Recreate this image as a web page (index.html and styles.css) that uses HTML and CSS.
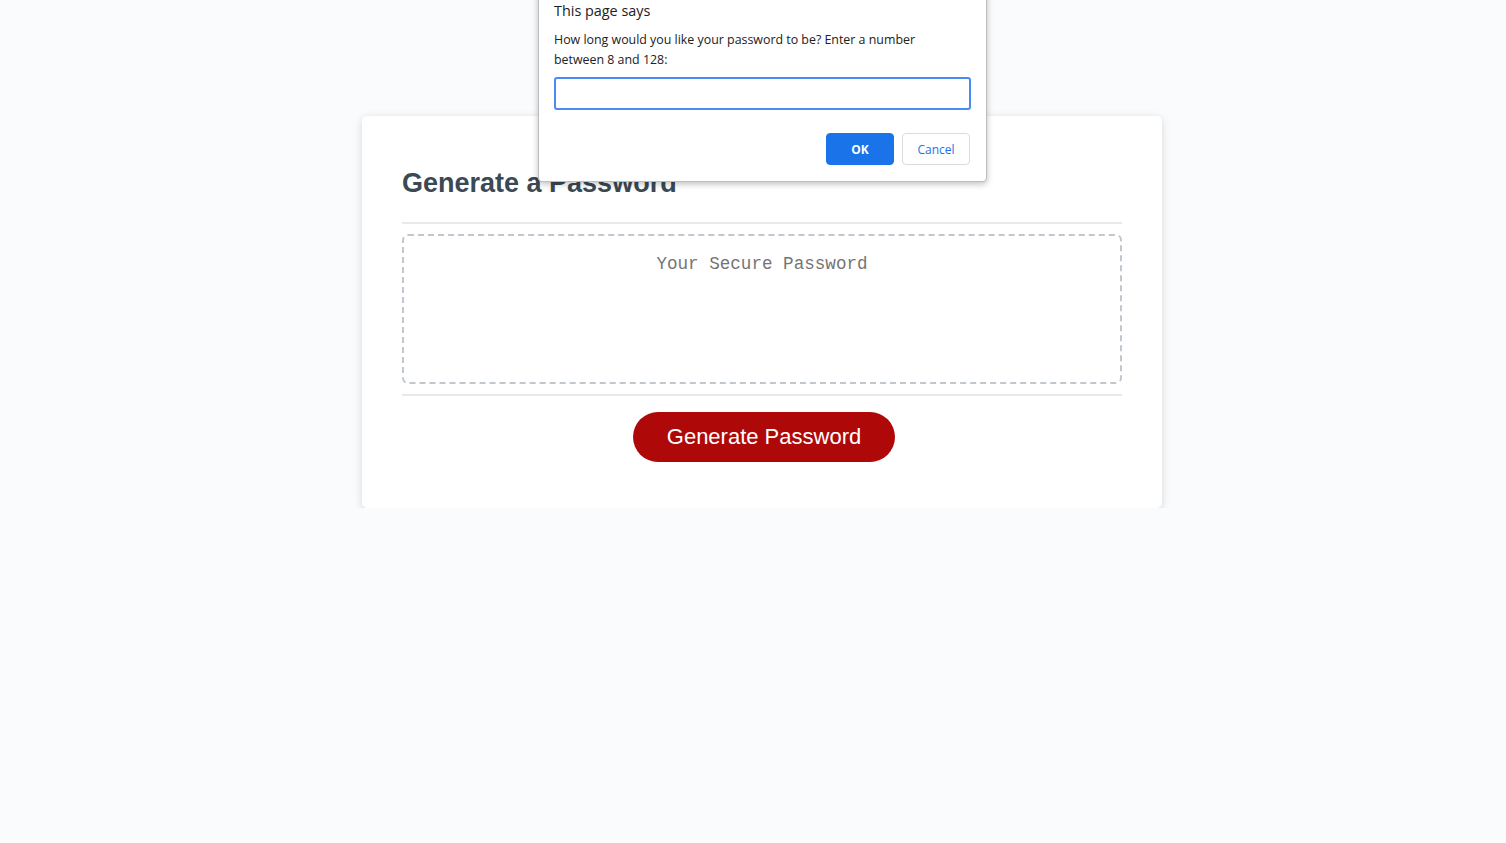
FILE: index.html
```html
<!DOCTYPE html>
<html lang="en">
<head>
<meta charset="utf-8">
<title>Password Generator</title>
<link rel="stylesheet" href="styles.css">
</head>
<body>
<div class="wrapper">
  <div class="card">
    <div class="card-header">
      <h2 class="card-title">Generate a Password</h2>
    </div>
    <div class="card-body">
      <textarea readonly class="password" placeholder="Your Secure Password" aria-label="Generated Password"></textarea>
    </div>
    <div class="card-footer">
      <button class="btn">Generate Password</button>
    </div>
  </div>
</div>

<div class="dialog" role="dialog">
  <div class="dialog-title">This page says</div>
  <div class="dialog-message">How long would you like your password to be? Enter a number between 8 and 128:</div>
  <div class="dialog-input"></div>
  <div class="dialog-actions">
    <button class="dlg-btn dlg-ok">OK</button>
    <button class="dlg-btn dlg-cancel">Cancel</button>
  </div>
</div>
</body>
</html>
```

FILE: styles.css
```css
html, body {
  margin: 0;
  padding: 0;
}
body {
  margin: 8px;
  font-family: "Liberation Sans", Arial, sans-serif;
  background-color: #f9fbfd;
}
.wrapper {
  padding: 108px 20px 0 38px;
}
.card {
  background-color: #fff;
  border-radius: 5px;
  box-shadow: rgba(0, 0, 0, 0.15) 0 2px 8px 0;
  color: hsl(206, 17%, 28%);
  font-size: 18px;
  margin: 0 auto;
  max-width: 800px;
  padding: 30px 40px;
  box-sizing: border-box;
}
.card-title {
  font-size: 27px;
  margin: 22.4px 0;
  line-height: 31px;
}
.card-header::after {
  content: " ";
  display: block;
  width: 100%;
  background: #e7e9eb;
  height: 2px;
}
.card-footer {
  text-align: center;
}
.card-footer::before {
  content: " ";
  display: block;
  width: 100%;
  background: #e7e9eb;
  height: 2px;
}
.password {
  -webkit-appearance: none;
  appearance: none;
  display: block;
  box-sizing: border-box;
  width: 100%;
  height: 150px;
  padding: 17px 15px 83px;
  margin: 10px 0;
  font-family: "Liberation Mono", "DejaVu Sans Mono", monospace;
  font-size: 17.6px;
  line-height: 23px;
  text-align: center;
  border: 2px dashed #c0c7cf;
  border-radius: 6px;
  resize: none;
  overflow: hidden;
  background: #fff;
  outline: none;
}
.password::placeholder {
  color: #757575;
}
.btn {
  border: none;
  background-color: hsl(360, 91%, 36%);
  border-radius: 25px;
  color: #fff;
  display: inline-block;
  font-family: "Liberation Sans", Arial, sans-serif;
  font-size: 22px;
  line-height: 22px;
  margin: 16px 16px 16px 20px;
  padding: 14px 34px;
  text-align: center;
  cursor: pointer;
}

/* native prompt dialog */
.dialog {
  position: absolute;
  left: 538px;
  top: -11px;
  width: 449px;
  box-sizing: border-box;
  padding: 10px 15px 16px;
  background: #fff;
  border: 1px solid #bdbdbd;
  border-radius: 0 0 4px 4px;
  box-shadow: 0 2px 6px rgba(0, 0, 0, 0.25);
  font-family: "Open Sans", "Noto Sans", sans-serif;
  color: #202124;
}
.dialog-title {
  font-size: 14.4px;
  line-height: 22px;
}
.dialog-message {
  margin-top: 8px;
  font-size: 12.4px;
  line-height: 20px;
  padding-right: 40px;
}
.dialog-input {
  margin-top: 7px;
  height: 33px;
  box-sizing: border-box;
  border: 2px solid #4a8af4;
  border-radius: 3px;
}
.dialog-actions {
  display: flex;
  justify-content: flex-end;
  gap: 8px;
  margin-top: 23px;
  padding-right: 1px;
}
.dlg-btn {
  width: 68px;
  height: 32px;
  border-radius: 4px;
  font-family: "Open Sans", "Noto Sans", sans-serif;
  font-size: 12px;
  cursor: pointer;
}
.dlg-ok {
  background: #1a73e8;
  border: 1px solid #1a73e8;
  color: #fff;
  font-weight: 700;
}
.dlg-cancel {
  background: #fff;
  border: 1px solid #dadce0;
  color: #1a73e8;
}
```
